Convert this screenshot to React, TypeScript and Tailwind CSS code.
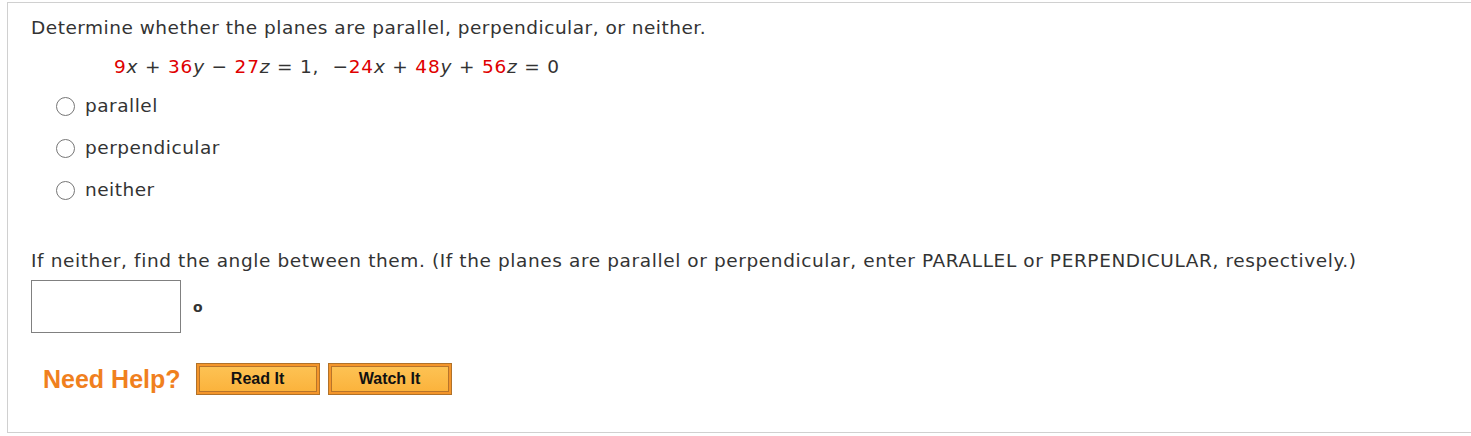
import React from "react";

const Radio = ({ label }: { label: string }) => (
  <label className="flex items-center h-[42px]">
    <span className="w-[19px] h-[19px] rounded-full border-[1.5px] border-[#767676] bg-white ml-[25px] mr-[10px]" />
    <span>{label}</span>
  </label>
);

const Btn = ({ label }: { label: string }) => (
  <button className="w-[124px] h-[32px] border border-[#b0722a] bg-[#f4952a] p-[2px]">
    <div className="w-full h-full border border-[#b8742a] bg-gradient-to-b from-[#fdc253] to-[#fbb33c] flex items-center justify-center text-[16px] font-bold text-[#111] tracking-normal [font-family:'Liberation_Sans',Arial,sans-serif]">
      {label}
    </div>
  </button>
);

export default function App() {
  const red = "text-[#e00000]";
  return (
    <div className="w-[1471px] h-[436px] bg-white pt-[2px] pl-[7px] pb-[3px] [font-family:'DejaVu_Sans',Verdana,sans-serif] text-[#333] text-[18.5px] tracking-[0.5px]">
      <div className="h-[431px] border-t border-l border-b border-[#d0d0d0] pl-[23px] pt-[13px]">
        <div className="leading-[24px]">Determine whether the planes are parallel, perpendicular, or neither.</div>
        <div className="ml-[83px] mt-[15px] leading-[24px] whitespace-pre tracking-[0.8px]">
          <span className={red}>9</span><i>x</i>{" + "}<span className={red}>36</span><i>y</i>{" − "}<span className={red}>27</span><i>z</i>{" = 1,  −"}<span className={red}>24</span><i>x</i>{" + "}<span className={red}>48</span><i>y</i>{" + "}<span className={red}>56</span><i>z</i>{" = 0"}
        </div>
        <div className="mt-[6px]">
          <Radio label="parallel" />
          <Radio label="perpendicular" />
          <Radio label="neither" />
        </div>
        <div className="mt-[38px] leading-[24px] tracking-[0.6px]">
          If neither, find the angle between them. (If the planes are parallel or perpendicular, enter PARALLEL or PERPENDICULAR, respectively.)
        </div>
        <div className="flex items-center mt-[7px]">
          <div className="w-[150px] h-[53px] border border-[#808080] bg-white" />
          <span className="ml-[12px] text-[14px] mt-[2px] font-bold">o</span>
        </div>
        <div className="flex items-center mt-[26px] ml-[12px]">
          <span className="text-[#f0801e] font-bold text-[25px] tracking-normal [font-family:'Liberation_Sans',Arial,sans-serif] mr-[15px] mt-[2px]">Need Help?</span>
          <Btn label="Read It" />
          <div className="w-[8px]" />
          <Btn label="Watch It" />
        </div>
      </div>
    </div>
  );
}
